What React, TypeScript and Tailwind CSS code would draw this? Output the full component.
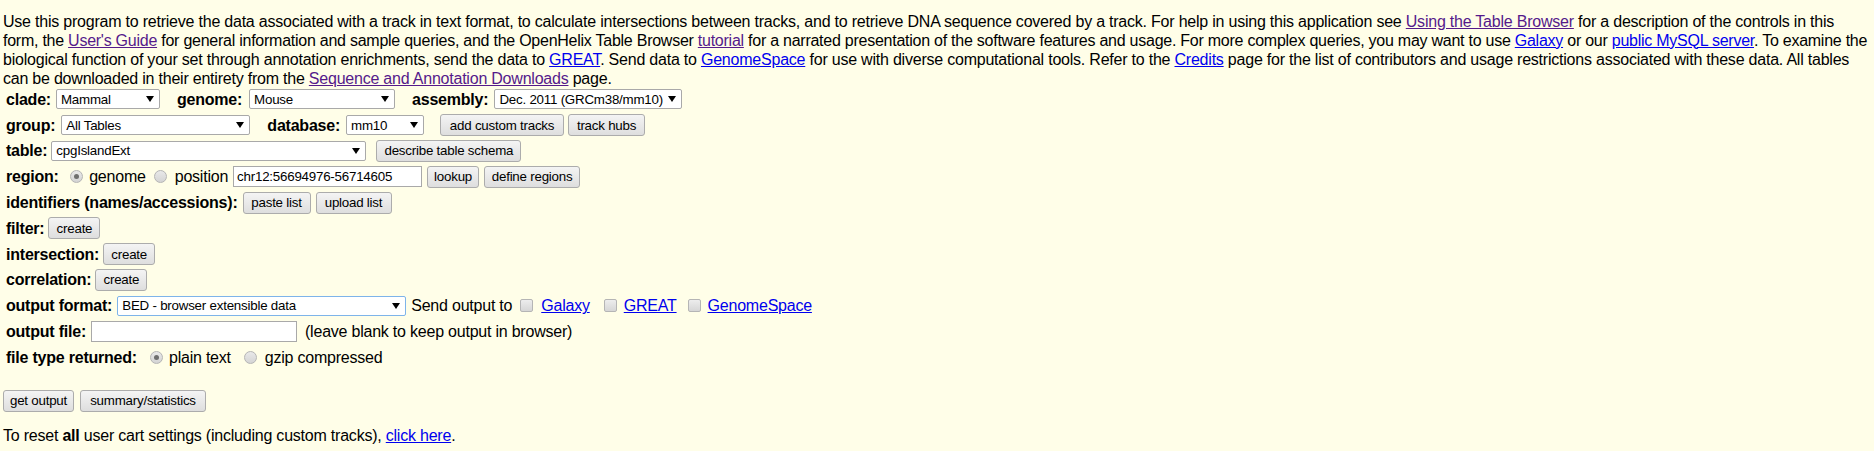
import type { ReactNode } from 'react'

const VISITED = 'text-[#551A8B] underline'
const LINK = 'text-[#0000EE] underline'

function Sel({ w, text, ml = '', focus = false }: { w: string; text: string; ml?: string; focus?: boolean }) {
  return (
    <div
      className={`${w} ${ml} flex h-[20px] shrink-0 items-center justify-between rounded-[2px] border bg-white pl-[4px] pr-[5px] text-[13.33px] leading-none ${
        focus ? 'border-[#7eb4ea]' : 'border-[#a9a9a9]'
      }`}
    >
      <span>{text}</span>
      <svg width="8" height="6" viewBox="0 0 8 6" className="ml-[4px] shrink-0">
        <path d="M0 0 H8 L4 6 Z" fill="#000" />
      </svg>
    </div>
  )
}

function Btn({ w, ml = '', children }: { w: string; ml?: string; children: ReactNode }) {
  return (
    <div
      className={`${w} ${ml} flex h-[22px] shrink-0 items-center justify-center rounded-[3px] border border-[#acacac] bg-gradient-to-b from-[#f4f4f4] to-[#dedede] text-[13.33px] leading-none`}
    >
      {children}
    </div>
  )
}

function Radio({ checked = false, ml = '' }: { checked?: boolean; ml?: string }) {
  return (
    <span
      className={`${ml} flex h-[13px] w-[13px] shrink-0 items-center justify-center rounded-full border border-[#b5b5b5] bg-gradient-to-b from-[#e9e9e9] to-[#d4d4d4]`}
    >
      {checked && <span className="h-[5px] w-[5px] rounded-full bg-[#6f6f6f]" />}
    </span>
  )
}

function Check({ ml = '' }: { ml?: string }) {
  return (
    <span
      className={`${ml} h-[13px] w-[13px] shrink-0 rounded-[2px] border border-[#b5b5b5] bg-gradient-to-b from-[#ededed] to-[#d6d6d6]`}
    />
  )
}

function Row({ children }: { children: ReactNode }) {
  return <div className="flex h-[25.8px] items-center whitespace-nowrap">{children}</div>
}

export default function App() {
  return (
    <div className="min-h-screen bg-[#FFFEE8] pl-[3px] pt-[11.5px] font-['Liberation_Sans',Arial,sans-serif] text-[16px] leading-[19px] tracking-[-0.22px] text-black">
      {/* Intro */}
      <p className="whitespace-nowrap">
        Use this program to retrieve the data associated with a track in text format, to calculate intersections between
        tracks, and to retrieve DNA sequence covered by a track. For help in using this application see{' '}
        <a className={VISITED}>Using the Table Browser</a> for a description of the controls in this
        <br />
        <span className="tracking-[-0.25px]">
          form, the <a className={VISITED}>User's Guide</a> for general information and sample queries, and the
          OpenHelix Table Browser <a className={VISITED}>tutorial</a> for a narrated presentation of the software
          features and usage. For more complex queries, you may want to use <a className={LINK}>Galaxy</a> or our{' '}
          <a className={LINK}>public MySQL server</a>. To examine the
        </span>
        <br />
        biological function of your set through annotation enrichments, send the data to <a className={LINK}>GREAT</a>.
        Send data to <a className={LINK}>GenomeSpace</a> for use with diverse computational tools. Refer to the{' '}
        <a className={LINK}>Credits</a> page for the list of contributors and usage restrictions associated with these
        data. All tables
        <br />
        can be downloaded in their entirety from the <a className={VISITED}>Sequence and Annotation Downloads</a> page.
      </p>

      {/* Form */}
      <div className="-mt-[1px] pl-[3px]">
        <Row>
          <b>clade:</b>
          <Sel w="w-[104px]" ml="ml-[5px]" text="Mammal" />
          <b className="ml-[17px]">genome:</b>
          <Sel w="w-[146px]" ml="ml-[7px]" text="Mouse" />
          <b className="ml-[17px]">assembly:</b>
          <Sel w="w-[188px]" ml="ml-[6px]" text="Dec. 2011 (GRCm38/mm10)" />
        </Row>
        <Row>
          <b>group:</b>
          <Sel w="w-[189px]" ml="ml-[6px]" text="All Tables" />
          <b className="ml-[17px]">database:</b>
          <Sel w="w-[78px]" ml="ml-[6px]" text="mm10" />
          <Btn w="w-[124px]" ml="ml-[16px]">add custom tracks</Btn>
          <Btn w="w-[77px]" ml="ml-[4px]">track hubs</Btn>
        </Row>
        <Row>
          <b>table:</b>
          <Sel w="w-[315px]" ml="ml-[4px]" text="cpgIslandExt" />
          <Btn w="w-[145px]" ml="ml-[10px]">describe table schema</Btn>
        </Row>
        <Row>
          <b>region:</b>
          <Radio checked ml="ml-[11px]" />
          <span className="ml-[6.5px]">genome</span>
          <Radio ml="ml-[8.5px]" />
          <span className="ml-[7.5px]">position</span>
          <div className="ml-[5px] flex h-[21px] w-[189px] items-center border border-[#a9a9a9] bg-white pl-[3px] text-[13.33px] leading-none">
            chr12:56694976-56714605
          </div>
          <Btn w="w-[52px]" ml="ml-[5px]">lookup</Btn>
          <Btn w="w-[96px]" ml="ml-[5px]">define regions</Btn>
        </Row>
        <Row>
          <b>identifiers (names/accessions):</b>
          <Btn w="w-[68px]" ml="ml-[5px]">paste list</Btn>
          <Btn w="w-[76px]" ml="ml-[5px]">upload list</Btn>
        </Row>
        <Row>
          <b>filter:</b>
          <Btn w="w-[52px]" ml="ml-[4px]">create</Btn>
        </Row>
        <Row>
          <b>intersection:</b>
          <Btn w="w-[52px]" ml="ml-[4px]">create</Btn>
        </Row>
        <Row>
          <b>correlation:</b>
          <Btn w="w-[52px]" ml="ml-[4px]">create</Btn>
        </Row>
        <Row>
          <b>output format:</b>
          <Sel w="w-[289px]" ml="ml-[5px]" text="BED - browser extensible data" focus />
          <span className="ml-[5px]">Send output to</span>
          <Check ml="ml-[8px]" />
          <a className={`${LINK} ml-[8px]`}>Galaxy</a>
          <Check ml="ml-[14px]" />
          <a className={`${LINK} ml-[7px]`}>GREAT</a>
          <Check ml="ml-[11px]" />
          <a className={`${LINK} ml-[7px]`}>GenomeSpace</a>
        </Row>
        <Row>
          <b>output file:</b>
          <div className="ml-[5px] h-[21px] w-[206px] border border-[#a9a9a9] bg-white" />
          <span className="ml-[8px]">(leave blank to keep output in browser)</span>
        </Row>
        <Row>
          <b>file type returned:</b>
          <Radio checked ml="ml-[13.5px]" />
          <span className="ml-[5.5px]">plain text</span>
          <Radio ml="ml-[13.5px]" />
          <span className="ml-[7.5px]">gzip compressed</span>
        </Row>
      </div>

      {/* Actions */}
      <div className="mt-[19.6px] flex">
        <Btn w="w-[71px]">get output</Btn>
        <Btn w="w-[126px]" ml="ml-[6px]">summary/statistics</Btn>
      </div>

      <p className="mt-[14.5px] pb-[6px]">
        To reset <b>all</b> user cart settings (including custom tracks), <a className={LINK}>click here</a>.
      </p>
    </div>
  )
}
